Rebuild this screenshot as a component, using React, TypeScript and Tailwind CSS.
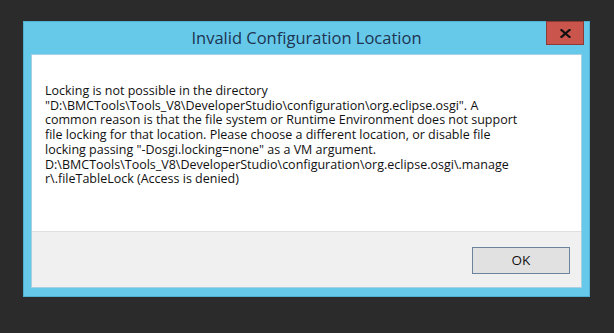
const lines = [
  "Locking is not possible in the directory",
  "\"D:\\BMCTools\\Tools_V8\\DeveloperStudio\\configuration\\org.eclipse.osgi\". A",
  "common reason is that the file system or Runtime Environment does not support",
  "file locking for that location. Please choose a different location, or disable file",
  "locking passing \"-Dosgi.locking=none\" as a VM argument.",
  "D:\\BMCTools\\Tools_V8\\DeveloperStudio\\configuration\\org.eclipse.osgi\\.manage",
  "r\\.fileTableLock (Access is denied)",
];

export default function App() {
  return (
    <div className="w-[614px] h-[333px] bg-[#2b2b2b] pt-[21px] pl-[23px] font-['Open_Sans',sans-serif]">
      <div className="relative w-[567px] h-[276px] bg-[#66c9ea] border border-[#4fb0d2] flex flex-col px-[7px] pb-[8px]">
        <div className="h-[32px] flex items-center justify-center text-[16.5px] text-[#1d3350] pt-[1px]">
          Invalid Configuration Location
        </div>
        <button className="absolute -top-px right-[5px] w-[38px] h-[24px] bg-[#c9554c] border border-[#8e3a34] flex items-center justify-center">
          <svg width="11" height="9" viewBox="0 0 11 9">
            <path d="M1.5 1 L9.5 8 M9.5 1 L1.5 8" stroke="#111" strokeWidth="2.2" strokeLinecap="square" />
          </svg>
        </button>
        <div className="flex-1 flex flex-col border border-[#a9cfe0]">
          <div className="flex-1 bg-white pl-[13px] pt-[29px] text-[12.5px] leading-[14.7px] text-[#111]">
            {lines.map((l) => (
              <div key={l} className="whitespace-nowrap">{l}</div>
            ))}
          </div>
          <div className="h-[56px] bg-[#f0f0f0] border-t border-[#dfdfdf] flex justify-end items-start pt-[15px] pr-[11px]">
            <button className="w-[98px] h-[27px] bg-[#e1e1e1] border border-[#6d829c] text-[13.5px] text-[#111]">
              OK
            </button>
          </div>
        </div>
      </div>
    </div>
  );
}
